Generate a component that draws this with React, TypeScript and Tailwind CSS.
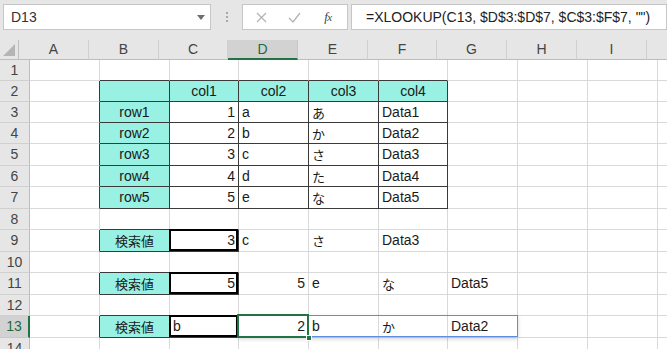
import React from 'react';

// Reproduction d'une feuille Excel : barre de formule + grille A..J / lignes 1..14.

type Align = 'left' | 'right' | 'center';
interface Cell {
  text: string;
  align: Align;
  jp?: boolean;
}

const COLS: { name: string; w: string }[] = [
  { name: 'A', w: 'w-[70px]' },
  { name: 'B', w: 'w-[70px]' },
  { name: 'C', w: 'w-[69px]' },
  { name: 'D', w: 'w-[70px]' },
  { name: 'E', w: 'w-[70px]' },
  { name: 'F', w: 'w-[69px]' },
  { name: 'G', w: 'w-[70px]' },
  { name: 'H', w: 'w-[70px]' },
  { name: 'I', w: 'w-[70px]' },
  { name: 'J', w: 'w-[70px]' },
];

// hauteurs 21/22 alternées pour retomber sur ~21.33px par ligne
const ROW_H: Record<number, string> = {
  1: 'h-[21px]', 2: 'h-[21px]', 3: 'h-[21px]', 4: 'h-[21px]', 5: 'h-[22px]',
  6: 'h-[21px]', 7: 'h-[22px]', 8: 'h-[21px]', 9: 'h-[22px]', 10: 'h-[21px]',
  11: 'h-[22px]', 12: 'h-[21px]', 13: 'h-[22px]', 14: 'h-[21px]',
};

const DATA: Record<string, Cell> = {
  C2: { text: 'col1', align: 'center' },
  D2: { text: 'col2', align: 'center' },
  E2: { text: 'col3', align: 'center' },
  F2: { text: 'col4', align: 'center' },
  B3: { text: 'row1', align: 'center' }, C3: { text: '1', align: 'right' }, D3: { text: 'a', align: 'left' }, E3: { text: 'あ', align: 'left', jp: true }, F3: { text: 'Data1', align: 'left' },
  B4: { text: 'row2', align: 'center' }, C4: { text: '2', align: 'right' }, D4: { text: 'b', align: 'left' }, E4: { text: 'か', align: 'left', jp: true }, F4: { text: 'Data2', align: 'left' },
  B5: { text: 'row3', align: 'center' }, C5: { text: '3', align: 'right' }, D5: { text: 'c', align: 'left' }, E5: { text: 'さ', align: 'left', jp: true }, F5: { text: 'Data3', align: 'left' },
  B6: { text: 'row4', align: 'center' }, C6: { text: '4', align: 'right' }, D6: { text: 'd', align: 'left' }, E6: { text: 'た', align: 'left', jp: true }, F6: { text: 'Data4', align: 'left' },
  B7: { text: 'row5', align: 'center' }, C7: { text: '5', align: 'right' }, D7: { text: 'e', align: 'left' }, E7: { text: 'な', align: 'left', jp: true }, F7: { text: 'Data5', align: 'left' },
  B9: { text: '検索値', align: 'center', jp: true }, C9: { text: '3', align: 'right' }, D9: { text: 'c', align: 'left' }, E9: { text: 'さ', align: 'left', jp: true }, F9: { text: 'Data3', align: 'left' },
  B11: { text: '検索値', align: 'center', jp: true }, C11: { text: '5', align: 'right' }, D11: { text: '5', align: 'right' }, E11: { text: 'e', align: 'left' }, F11: { text: 'な', align: 'left', jp: true }, G11: { text: 'Data5', align: 'left' },
  B13: { text: '検索値', align: 'center', jp: true }, C13: { text: 'b', align: 'left' }, D13: { text: '2', align: 'right' }, E13: { text: 'b', align: 'left' }, F13: { text: 'か', align: 'left', jp: true }, G13: { text: 'Data2', align: 'left' },
};

// cellules à bordure fine foncée (c = index de colonne, 0 = A)
function bordered(r: number, c: number) {
  if (r >= 2 && r <= 7 && c >= 1 && c <= 5) return true;
  if ((r === 9 || r === 11 || r === 13) && (c === 1 || c === 2)) return true;
  return false;
}

function cyan(r: number, c: number) {
  if (r === 2 && c >= 1 && c <= 5) return true;
  if (r >= 3 && r <= 7 && c === 1) return true;
  if ((r === 9 || r === 11 || r === 13) && c === 1) return true;
  return false;
}

const ALIGN: Record<Align, string> = {
  left: 'justify-start',
  right: 'justify-end',
  center: 'justify-center',
};

function Toolbar() {
  return (
    <div className="h-[40px] bg-[#e6e6e6] flex items-start pt-[4px] pl-[3px] gap-0">
      <div className="w-[208px] h-[26px] bg-white border border-[#c6c6c6] flex items-center pl-[7px] pr-[5px]">
        <span className="flex-1 text-[14px] text-[#333]">D13</span>
        <svg width="8" height="5" viewBox="0 0 8 5">
          <path d="M0 0 L8 0 L4 5 Z" fill="#6f6f6f" />
        </svg>
      </div>
      <div className="w-[31px] h-[26px] flex flex-col items-center justify-center gap-[2px]">
        <span className="w-[2px] h-[2px] bg-[#a8a8a8]" />
        <span className="w-[2px] h-[2px] bg-[#a8a8a8]" />
        <span className="w-[2px] h-[2px] bg-[#a8a8a8]" />
      </div>
      <div className="w-[106px] h-[26px] bg-white border border-[#c6c6c6] flex items-center">
        <div className="w-[34px] flex justify-center pl-[2px]">
          <svg width="11" height="11" viewBox="0 0 11 11">
            <path d="M1 1 L10 10 M10 1 L1 10" stroke="#b4b4b4" strokeWidth="1.3" />
          </svg>
        </div>
        <div className="w-[34px] flex justify-center">
          <svg width="13" height="11" viewBox="0 0 13 11">
            <path d="M1 6 L5 10 L12 1" stroke="#b4b4b4" strokeWidth="1.3" fill="none" />
          </svg>
        </div>
        <div className="w-[34px] flex justify-center">
          <span className="italic text-[13px] text-[#444] font-['Liberation_Serif',serif] tracking-[-0.5px]">
            f<span className="text-[11px]">x</span>
          </span>
        </div>
      </div>
      <div className="ml-[3px] flex-1 h-[26px] bg-white border border-[#c6c6c6] flex items-center pl-[14px]">
        <span className="text-[14px] text-[#222] whitespace-pre">=XLOOKUP(C13, $D$3:$D$7, $C$3:$F$7, "")</span>
      </div>
    </div>
  );
}

function ColumnHeader() {
  return (
    <div className="flex h-[20px]">
      <div className="w-[30px] h-full bg-[#e6e6e6] border-r border-b border-[#bdbdbd] relative flex items-end justify-end p-[3px]">
        <svg width="12" height="12" viewBox="0 0 12 12">
          <path d="M12 0 L12 12 L0 12 Z" fill="#b5b5b5" />
        </svg>
      </div>
      {COLS.map((col) =>
        col.name === 'D' ? (
          <div
            key={col.name}
            className={`${col.w} shrink-0 h-full bg-[#d2d2d2] border-r border-[#c8c8c8] border-b-2 border-b-[#217346] flex items-center justify-center text-[14px] text-[#1e6b3f]`}
          >
            {col.name}
          </div>
        ) : (
          <div
            key={col.name}
            className={`${col.w} shrink-0 h-full bg-[#e6e6e6] border-r border-[#cfcfcf] border-b border-b-[#bdbdbd] flex items-center justify-center text-[14px] text-[#444]`}
          >
            {col.name}
          </div>
        ),
      )}
    </div>
  );
}

function Row({ r }: { r: number }) {
  const h = ROW_H[r];
  const active = r === 13;
  return (
    <div className={`flex ${h}`}>
      {active ? (
        <div className="w-[30px] shrink-0 h-full bg-[#d2d2d2] border-r-2 border-r-[#217346] border-b border-b-[#c8c8c8] flex items-center justify-center text-[14px] text-[#1e6b3f]">
          {r}
        </div>
      ) : (
        <div className="w-[30px] shrink-0 h-full bg-[#e6e6e6] border-r border-r-[#bdbdbd] border-b border-b-[#d0d0d0] flex items-center justify-center text-[14px] text-[#444]">
          {r}
        </div>
      )}
      {COLS.map((col, c) => {
        const key = `${col.name}${r}`;
        const cell = DATA[key];
        const darkR = bordered(r, c) || bordered(r, c + 1);
        const darkB = bordered(r, c) || bordered(r + 1, c);
        const thick = (r === 9 || r === 11 || r === 13) && c === 2;
        const isSel = key === 'D13';
        return (
          <div
            key={key}
            className={[
              col.w,
              'shrink-0 h-full relative flex items-center px-[3px] border-r border-b text-[14px] text-[#1a1a1a] whitespace-nowrap',
              darkR ? 'border-r-[#3a3a3a]' : 'border-r-[#d9d9d9]',
              darkB ? 'border-b-[#3a3a3a]' : 'border-b-[#d9d9d9]',
              cyan(r, c) ? 'bg-[#98f1e2]' : 'bg-white',
              cell ? ALIGN[cell.align] : '',
            ].join(' ')}
          >
            {cell &&
              (cell.jp ? (
                <span className="text-[13px] font-['Noto_Sans_CJK_JP',sans-serif] leading-none">{cell.text}</span>
              ) : (
                <span>{cell.text}</span>
              ))}
            {thick && (
              <div className="absolute z-10 -left-px -top-px right-0 bottom-0 border-2 border-black pointer-events-none" />
            )}
            {isSel && (
              <>
                <div className="absolute z-10 -left-px -top-px w-[280px] bottom-0 border border-[#5b8de0] shadow-[0_2px_4px_rgba(0,0,0,0.18)] pointer-events-none" />
                <div className="absolute z-20 left-[-2px] top-[-2px] right-[-1px] bottom-[-1px] border-2 border-[#217346] pointer-events-none" />
                <div className="absolute z-20 right-[-4px] bottom-[-4px] w-[6px] h-[6px] bg-[#217346] border border-white" />
              </>
            )}
          </div>
        );
      })}
    </div>
  );
}

export default function App() {
  const rows = Array.from({ length: 14 }, (_, i) => i + 1);
  return (
    <div className="w-[667px] h-[349px] overflow-hidden bg-white font-['Liberation_Sans','Noto_Sans_CJK_JP',sans-serif]">
      <Toolbar />
      <ColumnHeader />
      {rows.map((r) => (
        <Row key={r} r={r} />
      ))}
    </div>
  );
}
